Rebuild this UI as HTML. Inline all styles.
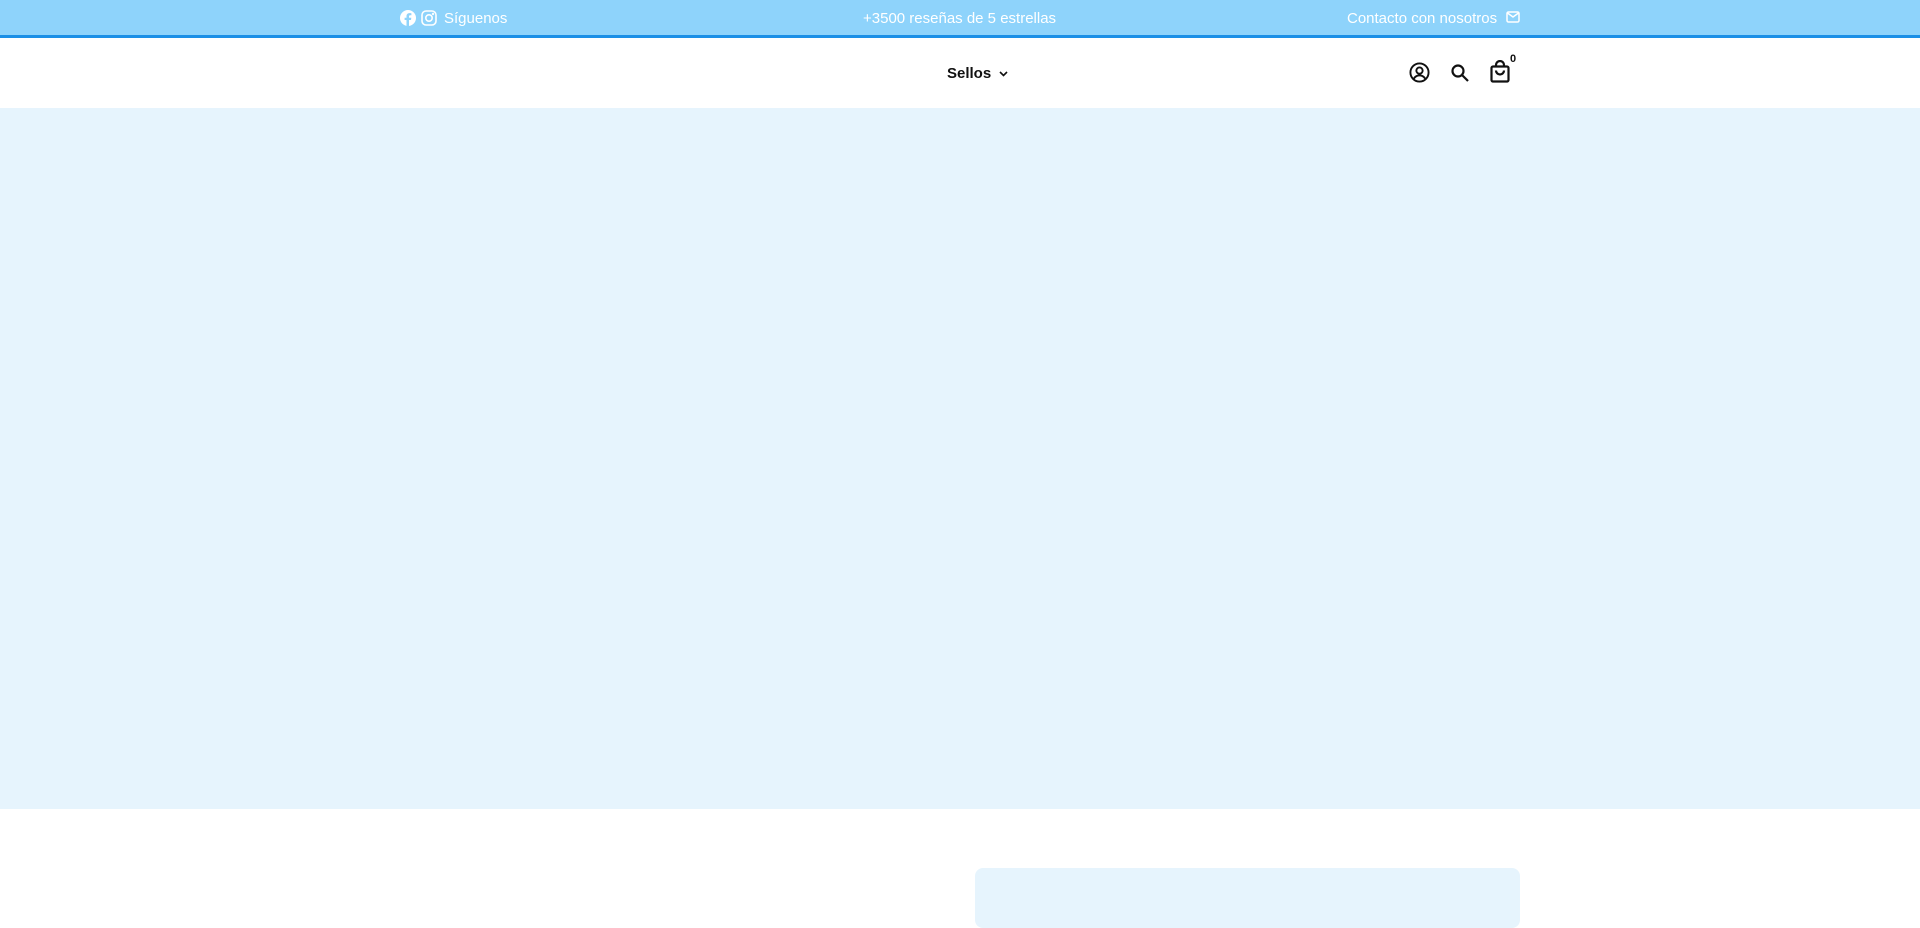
<!DOCTYPE html>
<html><head><meta charset="utf-8"><style>
*{margin:0;padding:0;box-sizing:border-box}
body{width:1920px;height:888px;overflow:hidden;background:#fff;font-family:"Liberation Sans",sans-serif;position:relative}
.top{position:absolute;left:0;top:0;width:1920px;height:38px;background:#8ed3fb;border-bottom:3px solid #1b8fe6;color:#fff;font-size:15px}
.top span,.top svg{position:absolute}
.hdr{position:absolute;top:38px;left:0;width:1920px;height:70px;background:#fff}
.hero{position:absolute;top:108px;left:0;width:1920px;height:701px;background:#e6f4fd}
.box{position:absolute;left:975px;top:868px;width:545px;height:60px;background:#e6f4fd;border-radius:8px}
</style></head><body>
<div class="top">
<svg style="left:400px;top:10px" width="16" height="16" viewBox="0 0 16 16"><circle cx="8" cy="8" r="8" fill="#fff"/><path d="M9 16V10h2l.3-2.3H9V6.3c0-.6.2-1.1 1.1-1.1h1.3V3.2c-.3 0-1-.1-1.9-.1-1.8 0-3 1.1-3 3.1v1.5H4.6V10h1.9v6z" fill="#8ed3fb"/></svg>
<svg style="left:421px;top:10px" width="16" height="16" viewBox="0 0 16 16" fill="none" stroke="#fff" stroke-width="1.6"><rect x="1" y="1" width="14" height="14" rx="4"/><circle cx="8" cy="8" r="3.2"/><circle cx="12" cy="4" r=".4" fill="#fff"/></svg>
<span style="left:444px;top:10px">Síguenos</span>
<span style="left:863px;top:10px">+3500 reseñas de 5 estrellas</span>
<span style="left:1347px;top:10px">Contacto con nosotros</span>
<svg style="left:1506px;top:11px" width="14" height="12" viewBox="0 0 14 12" fill="none" stroke="#fff" stroke-width="1.5"><rect x="1" y="1" width="12" height="10" rx="1.5"/><path d="M1.5 2l5.5 4 5.5-4"/></svg>
</div>
<div class="hdr">
<span style="position:absolute;left:947px;top:27px;font-size:15px;font-weight:bold;color:#111">Sellos</span>
<svg style="position:absolute;left:999px;top:33px" width="9" height="6" viewBox="0 0 9 6" fill="none" stroke="#111" stroke-width="1.6"><path d="M1 1l3.5 3.5L8 1"/></svg>
<svg style="position:absolute;left:1409px;top:24px" width="21" height="21" viewBox="0 0 22 22" fill="none" stroke="#111" stroke-width="2"><circle cx="11" cy="11" r="9.5"/><circle cx="11" cy="9" r="3.3"/><path d="M5 17.5c1.5-2.5 3.5-3.5 6-3.5s4.5 1 6 3.5"/></svg>
<svg style="position:absolute;left:1450px;top:25px" width="20" height="20" viewBox="0 0 20 20" fill="none" stroke="#111" stroke-width="2.2"><circle cx="8" cy="8" r="5.5"/><path d="M12 12l6 6"/></svg>
<svg style="position:absolute;left:1490px;top:22px" width="20" height="23" viewBox="0 0 20 23" fill="none" stroke="#111" stroke-width="2.2"><rect x="1.5" y="6.5" width="17" height="15" rx="1.5"/><path d="M6 6.5V5a4 4 0 018 0v1.5M6 10.5a4 4 0 008 0"/></svg>
<span style="position:absolute;left:1510px;top:15px;font-size:11px;font-weight:bold;color:#111">0</span>
</div>
<div class="hero"></div>
<div class="box"></div>
</body></html>
